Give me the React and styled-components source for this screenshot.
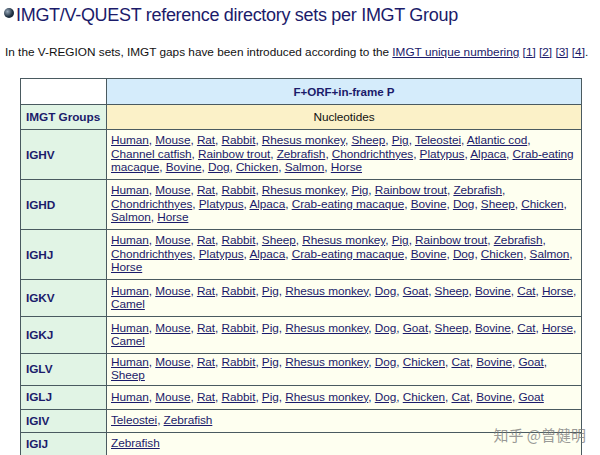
import React from 'react';
import styled, { createGlobalStyle } from 'styled-components';

const Global = createGlobalStyle`
  body { margin: 0; background: #fff; font-family: "Liberation Sans", Arial, sans-serif; color: #111; }
`;

const Page = styled.div`
  position: relative;
  width: 600px;
  height: 455px;
  overflow: hidden;
  padding: 5px 0 0 4px;
  box-sizing: border-box;
`;

const Title = styled.h1`
  margin: 0;
  display: flex;
  align-items: center;
  font-size: 18px;
  font-weight: normal;
  color: #1b1b6a;
  letter-spacing: -0.3px;
`;

const Bullet = styled.span`
  width: 10px;
  height: 10px;
  border-radius: 50%;
  margin: -6px 2px 0 0;
  background: radial-gradient(circle at 35% 35%, #9ab 0, #234 55%, #012 100%);
`;

const Intro = styled.p`
  margin: 19px 0 0 1px;
  font-size: 11.8px;
  letter-spacing: 0;
`;

const A = styled.a`
  color: #1b1b6a;
  text-decoration: underline;
`;

const Table = styled.table`
  margin: 19px 0 0 16px;
  width: 562px;
  border-collapse: collapse;
  font-size: 11.8px;
  letter-spacing: -0.05px;
  td, th { border: 1.5px solid #4a5a60; }
`;

const Label = styled.td`
  width: 75px;
  background: ${p => (p.blank ? '#fff' : '#e1f4e5')};
  color: #1b1b6a;
  font-weight: bold;
  padding: 0 5px;
  height: ${p => p.h}px;
`;

const Head = styled.th`
  background: #d5ecfb;
  color: #1b1b6a;
  height: 23px;
  font-size: 11.6px;
`;

const Nuc = styled.td`
  background: #fbf1c8;
  text-align: center;
  height: 22px;
`;

const Cell = styled.td`
  background: #fefff0;
  padding: 2px 4px 2px 4px;
  line-height: 13.4px;
  color: #1b1b6a;
`;

const Mark = styled.div`
  position: absolute;
  right: 14px;
  bottom: 10px;
  font-family: "Noto Sans CJK SC", sans-serif;
  font-size: 15px;
  color: rgba(120,120,120,0.75);
`;

const rows = [
  ['IGHV', 49, 'Human, Mouse, Rat, Rabbit, Rhesus monkey, Sheep, Pig, Teleostei, Atlantic cod, Channel catfish, Rainbow trout, Zebrafish, Chondrichthyes, Platypus, Alpaca, Crab-eating macaque, Bovine, Dog, Chicken, Salmon, Horse'],
  ['IGHD', 49, 'Human, Mouse, Rat, Rabbit, Rhesus monkey, Pig, Rainbow trout, Zebrafish, Chondrichthyes, Platypus, Alpaca, Crab-eating macaque, Bovine, Dog, Sheep, Chicken, Salmon, Horse'],
  ['IGHJ', 49, 'Human, Mouse, Rat, Rabbit, Sheep, Rhesus monkey, Pig, Rainbow trout, Zebrafish, Chondrichthyes, Platypus, Alpaca, Crab-eating macaque, Bovine, Dog, Chicken, Salmon, Horse'],
  ['IGKV', 36, 'Human, Mouse, Rat, Rabbit, Pig, Rhesus monkey, Dog, Goat, Sheep, Bovine, Cat, Horse, Camel'],
  ['IGKJ', 36, 'Human, Mouse, Rat, Rabbit, Pig, Rhesus monkey, Dog, Goat, Sheep, Bovine, Cat, Horse, Camel'],
  ['IGLV', 23, 'Human, Mouse, Rat, Rabbit, Pig, Rhesus monkey, Dog, Chicken, Cat, Bovine, Goat, Sheep'],
  ['IGLJ', 23, 'Human, Mouse, Rat, Rabbit, Pig, Rhesus monkey, Dog, Chicken, Cat, Bovine, Goat'],
  ['IGIV', 22, 'Teleostei, Zebrafish'],
  ['IGIJ', 22, 'Zebrafish'],
];

const Links = ({ text }) => {
  const items = text.split(', ');
  return items.map((s, i) => (
    <React.Fragment key={i}>
      <A href="#">{s}</A>{i < items.length - 1 ? ', ' : ''}
    </React.Fragment>
  ));
};

export default function App() {
  return (
    <Page>
      <Global />
      <Title><Bullet />IMGT/V-QUEST reference directory sets per IMGT Group</Title>
      <Intro>
        In the V-REGION sets, IMGT gaps have been introduced according to the{' '}
        <A href="#">IMGT unique numbering</A> <A href="#">[1]</A> <A href="#">[2]</A> <A href="#">[3]</A> <A href="#">[4]</A>.
      </Intro>
      <Table>
        <tbody>
          <tr><Label blank h={23} /><Head>F+ORF+in-frame P</Head></tr>
          <tr><Label h={22}>IMGT Groups</Label><Nuc>Nucleotides</Nuc></tr>
          {rows.map(([g, h, t]) => (
            <tr key={g}><Label h={h}>{g}</Label><Cell><Links text={t} /></Cell></tr>
          ))}
        </tbody>
      </Table>
      <Mark>知乎 @曾健明</Mark>
    </Page>
  );
}
